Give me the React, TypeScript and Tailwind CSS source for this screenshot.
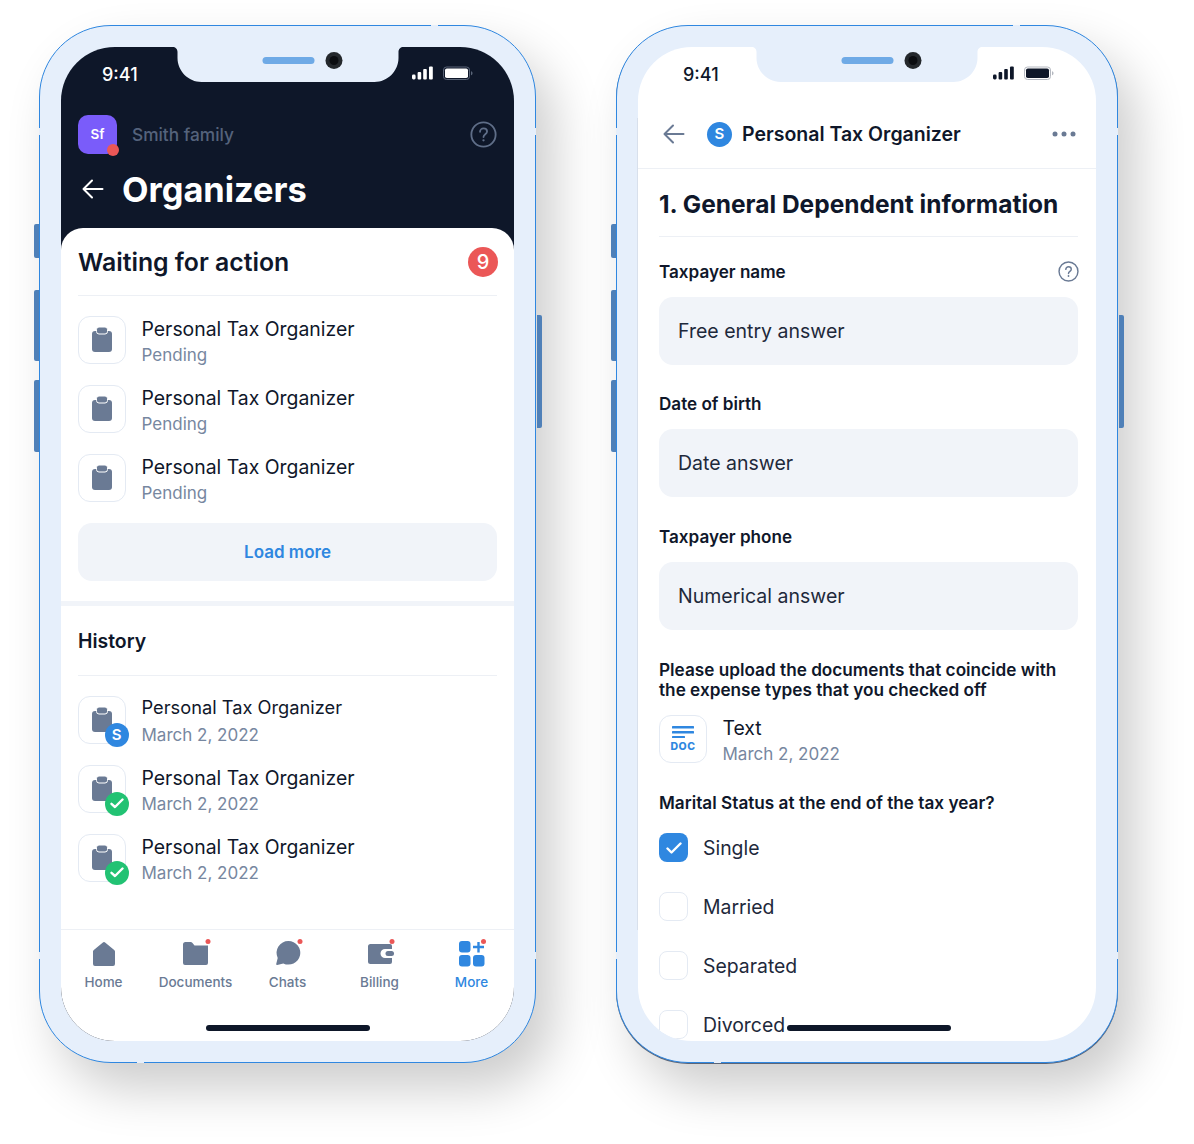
import type { ReactNode } from "react";

function ClipboardIcon() {
	return (
		<svg width="24" height="28" viewBox="0 0 24 28" aria-hidden="true">
			<rect x="2" y="5" width="20" height="21" rx="3" fill="#6A7A94" />
			<rect x="6.5" y="1" width="11" height="7" rx="2.5" fill="#6A7A94" stroke="#fff" strokeWidth="1" />
		</svg>
	);
}

function HelpIcon({ size, color }: { size: number; color: string }) {
	return (
		<svg width={size} height={size} viewBox="0 0 28 28" fill="none" stroke={color} aria-hidden="true">
			<circle cx="14" cy="14" r="12.6" strokeWidth="1.9" />
			<path d="M10.4 11.2c0-2.2 1.6-3.5 3.7-3.5s3.6 1.3 3.6 3.2c0 2.9-3.7 2.9-3.7 5.8" strokeWidth="1.9" strokeLinecap="round" />
			<circle cx="14" cy="20" r="1.2" fill={color} stroke="none" />
		</svg>
	);
}

function ArrowLeft({ color, className }: { color: string; className?: string }) {
	return (
		<svg className={className} width="22" height="20" viewBox="0 0 22 20" fill="none" stroke={color} strokeWidth="2" strokeLinecap="round" strokeLinejoin="round" aria-hidden="true">
			<path d="M1.5 10h19M10 1.5 1.5 10l8.5 8.5" />
		</svg>
	);
}

function StatusBar({ dark }: { dark?: boolean }) {
	const ink = dark ? "#0E1729" : "#fff";
	return (
		<div className={`flex h-[54px] shrink-0 items-center justify-between ${dark ? "pl-[45px] pr-[42px]" : "pl-[41px] pr-[41px]"}`}>
			<span className={`text-[18px] font-medium ${dark ? "text-[#0E1729]" : "text-white"}`}>9:41</span>
			<svg className="-mt-[3px]" width="61" height="14" viewBox="0 0 61 14" aria-hidden="true">
				<rect x="0" y="8.5" width="3.6" height="5" rx="1.4" fill={ink} />
				<rect x="5.6" y="6" width="3.6" height="7.5" rx="1" fill={ink} />
				<rect x="11.2" y="3" width="3.6" height="10.5" rx="1" fill={ink} />
				<rect x="17" y="0.5" width="3.8" height="13" rx="1" fill={ink} />
				<rect x="31.5" y="1" width="26" height="12.5" rx="3" fill="none" stroke={dark ? "#B4B8C0" : "#5A6578"} strokeWidth="1" />
				<rect x="33" y="2.5" width="23" height="9.5" rx="1.8" fill={ink} />
				<path d="M59 5.2c1 .3 1.5 1 1.5 2s-.5 1.700-1.500 2z" fill={dark ? "#B4B8C0" : "#5A6578"} />
			</svg>
		</div>
	);
}

function Notch() {
	return (
		<div className="absolute left-1/2 top-0 h-[35px] w-[231px] -translate-x-1/2">
			<svg width="231" height="35" viewBox="0 0 231 35" aria-hidden="true">
				<path d="M0 0C3 0 5 2 5 5V11C5 24 16 35 29 35H202C215 35 226 24 226 11V5C226 2 228 0 231 0Z" fill="#E6EFFB" />
			</svg>
			<div className="absolute left-[90px] top-[10px] h-[7px] w-[52px] rounded-full bg-[#6FAAE6]" />
			<div className="absolute left-[153px] top-[5px] flex h-[17px] w-[17px] items-center justify-center rounded-full bg-[#24282C]">
				<div className="h-[9px] w-[9px] rounded-full bg-[#0B0D10]" />
			</div>
		</div>
	);
}

function Phone({ className, children }: { className: string; children: ReactNode }) {
	return (
		<div className={`relative h-[1038px] shrink-0 rounded-[72px] border border-[#2F87E0] bg-[#E6EFFB] ${className}`}>
			{/* side buttons */}
			<div className="absolute -left-[6px] top-[198px] h-[34px] w-[5px] rounded-l-[2px] bg-[#4F80B8]" />
			<div className="absolute -left-[6px] top-[264px] h-[71px] w-[5px] rounded-l-[2px] bg-[#4F80B8]" />
			<div className="absolute -left-[6px] top-[354px] h-[72px] w-[5px] rounded-l-[2px] bg-[#4F80B8]" />
			<div className="absolute -right-[7px] top-[289px] h-[113px] w-[5px] rounded-r-[2px] bg-[#4F80B8]" />
			{/* antenna bands */}
			<div className="absolute -left-px top-[102px] h-[7px] w-[2px] bg-[#E6EFFB]" />
			<div className="absolute -right-px top-[102px] h-[7px] w-[2px] bg-[#E6EFFB]" />
			<div className="absolute -left-px top-[926px] h-[7px] w-[2px] bg-[#E6EFFB]" />
			<div className="absolute -right-px top-[926px] h-[7px] w-[2px] bg-[#E6EFFB]" />
			<div className="absolute -top-px right-[97px] h-[2px] w-[7px] bg-[#E6EFFB]" />
			<div className="absolute -bottom-px left-[97px] h-[2px] w-[7px] bg-[#E6EFFB]" />
			{children}
		</div>
	);
}

function DocRow({
	icon,
	title,
	sub,
	small,
	badge,
}: {
	icon: ReactNode;
	title: string;
	sub: string;
	small?: boolean;
	badge?: ReactNode;
}) {
	return (
		<div className="flex h-[48px] gap-[15.5px]">
			<div className="relative flex h-[48px] w-[48px] shrink-0 items-center justify-center rounded-[12px] border border-[#E4EAF3] bg-white">
				{icon}
				{badge}
			</div>
			<div className="min-w-0">
				<div className={`whitespace-nowrap text-[#0F172A] ${small ? "-mt-[2px] mb-[2px] text-[18.25px] leading-[26px]" : "text-[19.4px] leading-[26px]"}`}>
					{title}
				</div>
				<div className="whitespace-nowrap text-[17px] leading-[27px] text-[#7787A0]">{sub}</div>
			</div>
		</div>
	);
}

function UserBadge() {
	return (
		<div className="absolute -bottom-[4px] -right-[4px] flex h-[24.5px] w-[24.5px] items-center justify-center rounded-full bg-[#2F87E0] text-[15px] font-semibold text-white">
			S
		</div>
	);
}

function DoneBadge() {
	return (
		<div className="absolute -bottom-[4px] -right-[4px] flex h-[24.5px] w-[24.5px] items-center justify-center rounded-full bg-[#22C273]">
			<svg width="14" height="11" viewBox="0 0 14 11" fill="none" stroke="#fff" strokeWidth="2.400" strokeLinecap="round" strokeLinejoin="round" aria-hidden="true">
				<path d="M1.500 5.800 5 9l7.500-7.500" />
			</svg>
		</div>
	);
}

const dotProps = { r: 2.5, fill: "#EB5757" };

const navItems: { label: string; active?: boolean; icon: ReactNode }[] = [
	{
		label: "Home",
		icon: <path d="M14.600 3.700a2.200 2.200 0 0 1 2.800 0l8.800 7.200c.5.400.8 1 .8 1.700V25a2 2 0 0 1-2 2H7a2 2 0 0 1-2-2V12.600c0-.7.3-1.300.8-1.700z" fill="#6A7A94" />,
	},
	{
		label: "Documents",
		icon: (
			<>
				<path d="M3 5.500A2.500 2.500 0 0 1 5.500 3h5c.8 0 1.500.4 2 1l2 2.500H28V24a2 2 0 0 1-2 2H5a2 2 0 0 1-2-2z" fill="#6A7A94" />
				<circle cx="28" cy="2.500" {...dotProps} />
			</>
		),
	},
	{
		label: "Chats",
		icon: (
			<>
				<path d="M16.500 2a11.800 11.800 0 1 1-5.200 22.400L5.200 26c-.7.100-1.200-.4-1-1.100l1.500-6A11.800 11.800 0 0 1 16.500 2z" fill="#6A7A94" />
				<circle cx="28" cy="2.500" {...dotProps} />
			</>
		),
	},
	{
		label: "Billing",
		icon: (
			<>
				<path d="M4 7.500A2.500 2.500 0 0 1 6.500 5H26a2 2 0 0 1 2 2v3h-7a4.500 4.500 0 0 0 0 9h7v4a2 2 0 0 1-2 2H6.500A2.500 2.500 0 0 1 4 22.500z" fill="#6A7A94" />
				<rect x="21.500" y="12" width="8.500" height="5" rx="2.500" fill="#6A7A94" />
				<circle cx="28" cy="2.500" {...dotProps} />
			</>
		),
	},
	{
		label: "More",
		active: true,
		icon: (
			<>
				<rect x="3" y="2" width="11.500" height="11.500" rx="3" fill="#2F87E0" />
				<rect x="3" y="16" width="11.500" height="11.500" rx="3" fill="#2F87E0" />
				<rect x="17" y="16" width="11.500" height="11.500" rx="3" fill="#2F87E0" />
				<path d="M22.500 3v10.500M17 8h11" stroke="#2F87E0" strokeWidth="2.400" />
				<circle cx="27.500" cy="2.500" {...dotProps} />
			</>
		),
	},
];

function NavBar() {
	return (
		<div className="flex justify-center border-t border-[#EDF0F5] pt-[9px]">
			{navItems.map((item) => (
				<div key={item.label} className="flex w-[92px] shrink-0 flex-col items-center">
					<svg width="32" height="30" viewBox="0 0 32 30" aria-hidden="true">
						{item.icon}
					</svg>
					<span className={`mt-[3px] text-[13.5px] font-medium leading-[20px] ${item.active ? "text-[#2F87E0]" : "text-[#6A7A94]"}`}>
						{item.label}
					</span>
				</div>
			))}
		</div>
	);
}

function OrganizersScreen() {
	return (
		<div className="absolute inset-x-[21px] top-[21px] flex h-[994px] flex-col overflow-hidden rounded-[54px] bg-[#0E1729]">
			<Notch />
			<StatusBar />
			<div className="mt-[14px] flex items-center pl-[17px] pr-[17px]">
				<div className="relative flex h-[39px] w-[39px] items-center justify-center rounded-[10px] bg-[#7A5CFA] text-[13.5px] font-semibold text-white">
					Sf
					<div className="absolute -bottom-[2px] -right-[2px] h-[12px] w-[12px] rounded-full bg-[#EB5757]" />
				</div>
				<span className="ml-[15px] text-[17.3px] font-medium text-[#55637C]">Smith family</span>
				<div className="ml-auto">
					<HelpIcon size={27} color="#5F6E88" />
				</div>
			</div>
			<div className="mt-[12px] flex h-[48px] items-center pl-[21px]">
				<ArrowLeft color="#fff" className="-mt-[2px]" />
				<h1 className="ml-[18px] text-[34.4px] font-bold text-white">Organizers</h1>
			</div>
			<div className="mt-[14px] flex flex-1 flex-col rounded-t-[22px] bg-white">
				<div className="mx-[17px] flex h-[68px] shrink-0 items-center justify-between border-b border-[#EDF0F5] pt-[2px]">
					<h2 className="text-[24.8px] font-semibold text-[#0F172A]">Waiting for action</h2>
					<div className="-mr-[1px] -mt-[2px] flex h-[30px] w-[30px] items-center justify-center rounded-full bg-[#EB5757] text-[20px] font-medium text-white">9</div>
				</div>
				<div className="mx-[17px] mt-[20px] flex flex-col gap-[21px]">
					<DocRow icon={<ClipboardIcon />} title="Personal Tax Organizer" sub="Pending" />
					<DocRow icon={<ClipboardIcon />} title="Personal Tax Organizer" sub="Pending" />
					<DocRow icon={<ClipboardIcon />} title="Personal Tax Organizer" sub="Pending" />
				</div>
				<div className="mx-[17px] mt-[21px] flex h-[58px] shrink-0 items-center justify-center rounded-[14px] bg-[#F1F4F9] pt-[2px] text-[17px] font-semibold text-[#2F87E0]">
					Load more
				</div>
				<div className="mt-[20px] h-[5px] shrink-0 bg-[#F1F4F9]" />
				<div className="mx-[17px] flex h-[70px] shrink-0 items-center border-b border-[#EDF0F5] pt-[2px] text-[19.4px] font-semibold text-[#0F172A]">
					History
				</div>
				<div className="mx-[17px] mt-[20px] flex flex-col gap-[21px]">
					<DocRow icon={<ClipboardIcon />} title="Personal Tax Organizer" sub="March 2, 2022" small badge={<UserBadge />} />
					<DocRow icon={<ClipboardIcon />} title="Personal Tax Organizer" sub="March 2, 2022" badge={<DoneBadge />} />
					<DocRow icon={<ClipboardIcon />} title="Personal Tax Organizer" sub="March 2, 2022" badge={<DoneBadge />} />
				</div>
				<div className="mt-auto">
					<NavBar />
				</div>
				<div className="mx-auto mb-[10px] mt-[33px] h-[6px] w-[164px] shrink-0 rounded-full bg-[#0E1729]" />
			</div>
		</div>
	);
}

function Field({ label, answer, help, className }: { label: string; answer: string; help?: boolean; className: string }) {
	return (
		<div className={className}>
			<div className="flex h-[24px] items-center justify-between">
				<span className="text-[17.1px] font-semibold text-[#0F172A]">{label}</span>
				{help && (
					<div className="-mr-[1px] -mt-[2px]">
						<HelpIcon size={21} color="#6A7A94" />
					</div>
				)}
			</div>
			<div className="mt-[13px] flex h-[68px] items-center rounded-[14px] bg-[#F1F4F9] pl-[19px] pt-[2px] text-[19.5px] text-[#1E293B]">{answer}</div>
		</div>
	);
}

function Option({ label, checked }: { label: string; checked?: boolean }) {
	return (
		<div className="flex h-[29px] items-center gap-[15px]">
			{checked ? (
				<div className="flex h-[29px] w-[29px] shrink-0 items-center justify-center rounded-[8px] bg-[#2F87E0]">
					<svg width="16" height="12" viewBox="0 0 16 12" fill="none" stroke="#fff" strokeWidth="2.400" strokeLinecap="round" strokeLinejoin="round" aria-hidden="true">
						<path d="M1.500 6.500 5.500 10.500 14.500 1.500" />
					</svg>
				</div>
			) : (
				<div className="h-[29px] w-[29px] shrink-0 rounded-[8px] border border-[#E4EAF3] bg-white" />
			)}
			<span className="mt-[2px] text-[19.4px] text-[#1E293B]">{label}</span>
		</div>
	);
}

function FormScreen() {
	return (
		<div className="absolute inset-x-[21px] top-[21px] h-[994px] overflow-hidden rounded-[54px] bg-white">
			<Notch />
			<StatusBar dark />
			<div className="flex h-[68px] items-center border-b border-[#EDF0F5] pl-[25px] pr-[20px]">
				<ArrowLeft color="#6A7A94" className="-mt-[2px]" />
				<div className="ml-[22px] flex h-[25px] w-[25px] items-center justify-center rounded-full bg-[#2F87E0] text-[15px] font-semibold text-white">S</div>
				<span className="ml-[10px] text-[19.5px] font-semibold text-[#0F172A]">Personal Tax Organizer</span>
				<svg className="-mt-[2px] ml-auto" width="24" height="6" viewBox="0 0 24 6" fill="#6A7A94" aria-hidden="true">
					<circle cx="3" cy="3" r="2.500" />
					<circle cx="12" cy="3" r="2.500" />
					<circle cx="21" cy="3" r="2.500" />
				</svg>
			</div>
			<div className="pl-[21px] pr-[18px]">
				<h1 className="flex h-[68px] items-center border-b border-[#EDF0F5] pt-[3px] text-[24.5px] font-bold text-[#0F172A]">
					1. General Dependent information
				</h1>
				<Field label="Taxpayer name" answer="Free entry answer" help className="mt-[23px]" />
				<Field label="Date of birth" answer="Date answer" className="mt-[27px]" />
				<Field label="Taxpayer phone" answer="Numerical answer" className="mt-[28px]" />
				<p className="mt-[30px] text-[17.2px] font-semibold leading-[20px] text-[#0F172A]">
					Please upload the documents that coincide with the expense types that you checked off
				</p>
				<div className="mt-[15px]">
					<DocRow
						title="Text"
						sub="March 2, 2022"
						icon={
							<div className="flex flex-col items-center pt-[1px]">
								<svg width="22" height="12" viewBox="0 0 22 12" fill="#2F87E0" aria-hidden="true">
									<rect x="0" y="0" width="22" height="2.500" rx="0.500" />
									<rect x="0" y="5" width="22" height="2.500" rx="0.500" />
									<rect x="0" y="10" width="13" height="2" rx="0.500" />
								</svg>
								<span className="mt-[3px] text-[10.5px] font-extrabold leading-[12px] tracking-[0.5px] text-[#2F87E0]">DOC</span>
							</div>
						}
					/>
				</div>
				<div className="mt-[28px] flex h-[24px] items-center text-[17.2px] font-semibold text-[#0F172A]">
					Marital Status at the end of the tax year?
				</div>
				<div className="mt-[18px] flex flex-col gap-[30px]">
					<Option label="Single" checked />
					<Option label="Married" />
					<Option label="Separated" />
					<Option label="Divorced" />
				</div>
			</div>
			<div className="absolute bottom-[10px] left-[149px] h-[6px] w-[164px] rounded-full bg-[#0E1729]" />
		</div>
	);
}

export default function App() {
	return (
		<div className="flex h-[1144px] w-[1194px] gap-[80px] overflow-hidden bg-white pl-[39px] pt-[25px] font-['Inter',sans-serif]">
			<Phone className="w-[497px] shadow-[18px_26px_50px_rgba(0,0,0,0.2)]">
				<OrganizersScreen />
			</Phone>
			<Phone className="w-[502px] shadow-[0_1px_0_#5A6578,18px_26px_50px_rgba(0,0,0,0.2)]">
				<FormScreen />
				{/* faint seam along the screen's left edge */}
				<div className="absolute left-[20px] top-[92px] h-[812px] w-px bg-[#D8E0EC]" />
			</Phone>
		</div>
	);
}
